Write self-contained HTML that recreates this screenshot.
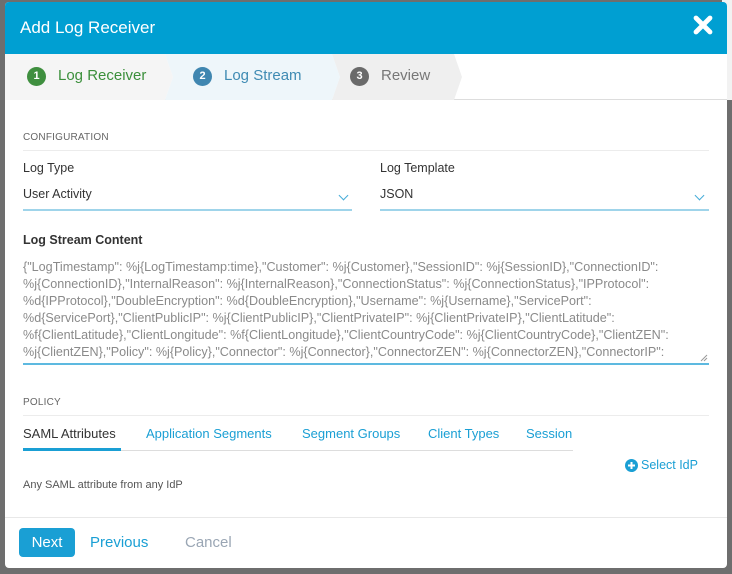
<!DOCTYPE html>
<html><head><meta charset="utf-8"><style>
*{margin:0;padding:0;box-sizing:border-box}
body{width:732px;height:574px;background:#6e6e6e;position:relative;overflow:hidden;font-family:"Liberation Sans",sans-serif}
.topright{position:absolute;right:0;top:0;width:10px;height:100px;background:#f2f2f2}
.modal{position:absolute;left:5px;top:2px;width:722px;height:566px;background:#fff;border-radius:4px;overflow:hidden}
.hdr{height:52px;background:#009fd2;color:#fff;font-size:17px;padding:16px 0 0 15px}
.x{position:absolute;right:13px;top:12px;width:22px;height:22px}
.steps{position:absolute;top:52px;left:0;width:722px;height:46px;border-bottom:1px solid #ddd}
.st{position:absolute;top:13px;font-size:15px}
.num{display:inline-block;width:19px;height:19px;border-radius:50%;color:#fff;font-size:11px;text-align:center;line-height:19px;margin-right:12px;vertical-align:1px;font-weight:bold}
.a{position:absolute;white-space:nowrap}
.sec{font-size:10px;color:#666;letter-spacing:.2px}
.line{position:absolute;height:1px;background:#ececec}
.lbl{font-size:12.5px;color:#333}
.val{font-size:12.5px;color:#333}
.ul{position:absolute;height:2px;background:#9fd4ea}
.ta{position:absolute;left:0;top:5px;font-size:12.6px;color:#8a8a8a;line-height:17.1px;white-space:nowrap}
.tab{font-size:13px;color:#1a9fd4}
.chev{position:absolute;width:7px;height:7px;border-right:1.3px solid #45acd8;border-bottom:1.3px solid #45acd8;transform:rotate(45deg)}
</style></head><body>
<div class="topright"></div>
<div class="modal">
<div class="hdr">Add Log Receiver</div>
<svg class="x" viewBox="0 0 22 22"><path d="M4 4L18 18M18 4L4 18" stroke="#fff" stroke-width="4.8" stroke-linecap="round"/></svg>
<div class="steps">
<svg width="722" height="46" style="position:absolute;left:0;top:0">
<polygon points="0,0 160,0 168,23 160,46 0,46" fill="#f5f5f5"/>
<polygon points="160,0 327,0 335,23 327,46 160,46 168,23" fill="#eef6fa"/>
<polygon points="327,0 449,0 457,23 449,46 327,46 335,23" fill="#efefef"/>
</svg>
<div class="st" style="left:22px;color:#3b8f3b"><span class="num" style="background:#3f8f3f">1</span>Log Receiver</div>
<div class="st" style="left:188px;color:#3f8bb3"><span class="num" style="background:#3f86b0">2</span>Log Stream</div>
<div class="st" style="left:345px;color:#777"><span class="num" style="background:#6a6a6a">3</span>Review</div>
</div>
<div class="a sec" style="left:18px;top:130px">CONFIGURATION</div>
<div class="line" style="left:18px;top:148px;width:686px"></div>
<div class="a lbl" style="left:18px;top:159px">Log Type</div>
<div class="a lbl" style="left:375px;top:159px">Log Template</div>
<div class="a val" style="left:18px;top:185px">User Activity</div>
<div class="a val" style="left:375px;top:185px">JSON</div>
<div class="chev" style="left:335px;top:190px"></div>
<div class="chev" style="left:691px;top:190px"></div>
<div class="ul" style="left:18px;top:207px;width:329px"></div>
<div class="ul" style="left:375px;top:207px;width:329px"></div>
<div class="a lbl" style="left:18px;top:231px;font-weight:bold;font-size:12.5px;color:#333">Log Stream Content</div>
<div style="position:absolute;left:18px;top:252px;width:686px;height:110px;overflow:hidden">
<div class="ta">{"LogTimestamp": %j{LogTimestamp:time},"Customer": %j{Customer},"SessionID": %j{SessionID},"ConnectionID":<br>%j{ConnectionID},"InternalReason": %j{InternalReason},"ConnectionStatus": %j{ConnectionStatus},"IPProtocol":<br>%d{IPProtocol},"DoubleEncryption": %d{DoubleEncryption},"Username": %j{Username},"ServicePort":<br>%d{ServicePort},"ClientPublicIP": %j{ClientPublicIP},"ClientPrivateIP": %j{ClientPrivateIP},"ClientLatitude":<br>%f{ClientLatitude},"ClientLongitude": %f{ClientLongitude},"ClientCountryCode": %j{ClientCountryCode},"ClientZEN":<br>%j{ClientZEN},"Policy": %j{Policy},"Connector": %j{Connector},"ConnectorZEN": %j{ConnectorZEN},"ConnectorIP":<br>%j{ConnectorIP},"ConnectorPort": %d{ConnectorPort},"Host": %j{Host},"Application": %j{Application},"AppGroup":</div>
</div>
<div class="ul" style="left:18px;top:361px;width:686px;height:2px;background:#5db9e0"></div>
<svg style="position:absolute;left:695px;top:352px" width="8" height="8"><path d="M1 7L7 1M4 7L7 4" stroke="#999" stroke-width="1"/></svg>
<div class="a sec" style="left:18px;top:395px">POLICY</div>
<div class="line" style="left:18px;top:413px;width:686px"></div>
<div class="a tab" style="left:18px;top:424px;color:#333">SAML Attributes</div>
<div class="a tab" style="left:141px;top:424px">Application Segments</div>
<div class="a tab" style="left:297px;top:424px">Segment Groups</div>
<div class="a tab" style="left:423px;top:424px">Client Types</div>
<div class="a tab" style="left:521px;top:424px">Session</div>
<div class="line" style="left:18px;top:448px;width:550px;background:#ddd"></div>
<div style="position:absolute;left:18px;top:446px;width:98px;height:3px;background:#1a9fd4"></div>
<svg style="position:absolute;left:620px;top:457px" width="13" height="13"><circle cx="6.5" cy="6.5" r="6.5" fill="#1a9fd4"/><path d="M6.5 3V10M3 6.5H10" stroke="#fff" stroke-width="2"/></svg>
<div class="a" style="left:636px;top:456px;font-size:12.5px;color:#1a9fd4">Select IdP</div>
<div class="a" style="left:18px;top:477px;font-size:11px;color:#555">Any SAML attribute from any IdP</div>
<div class="line" style="left:0;top:515px;width:722px;background:#e8e8e8"></div>
<div style="position:absolute;left:14px;top:526px;width:56px;height:29px;background:#1a9fd4;border-radius:4px;color:#fff;font-size:15px;text-align:center;line-height:29px">Next</div>
<div class="a" style="left:85px;top:532px;font-size:15px;color:#1a9fd4">Previous</div>
<div class="a" style="left:180px;top:532px;font-size:15px;color:#9aa6b4">Cancel</div>
</div>
</body></html>
